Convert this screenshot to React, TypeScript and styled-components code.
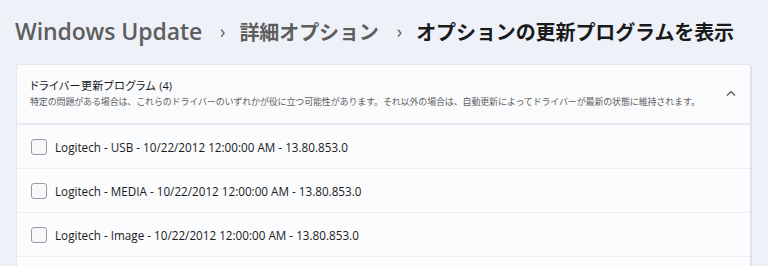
import styled, { createGlobalStyle } from "styled-components";

const GlobalStyle = createGlobalStyle`
  html, body {
    margin: 0;
    padding: 0;
    background: #eef2f8;
  }
  body {
    font-family: "Open Sans", "Noto Sans CJK JP", sans-serif;
    color: #1b1b1b;
    overflow: hidden;
  }
`;

// only the first three fit in the window
const drivers = [
  "Logitech - USB - 10/22/2012 12:00:00 AM - 13.80.853.0",
  "Logitech - MEDIA - 10/22/2012 12:00:00 AM - 13.80.853.0",
  "Logitech - Image - 10/22/2012 12:00:00 AM - 13.80.853.0",
];

const App = () => {
  return (
    <Page>
      <GlobalStyle />
      <Breadcrumb>
        <Crumb $latin>Windows Update</Crumb>
        <Separator>›</Separator>
        <Crumb>詳細オプション</Crumb>
        <Separator>›</Separator>
        <Crumb $current>オプションの更新プログラムを表示</Crumb>
      </Breadcrumb>

      <Expander>
        <ExpanderHeader>
          <HeaderText>
            <HeaderTitle>
              ドライバー更新プログラム <Count>(4)</Count>
            </HeaderTitle>
            <HeaderDesc>
              特定の問題がある場合は、これらのドライバーのいずれかが役に立つ可能性があります。それ以外の場合は、自動更新によってドライバーが最新の状態に維持されます。
            </HeaderDesc>
          </HeaderText>
          <ChevronButton>
            <svg width="10" height="6" viewBox="0 0 10 6">
              <polyline
                points="1,5.5 5,1.5 9,5.5"
                fill="none"
                stroke="#4a4a4a"
                strokeWidth="1.1"
              />
            </svg>
          </ChevronButton>
        </ExpanderHeader>
        <DriverList>
          {drivers.map((d) => (
            <DriverRow key={d}>
              <CheckBox />
              <DriverLabel>{d}</DriverLabel>
            </DriverRow>
          ))}
          <DriverRow />
        </DriverList>
      </Expander>
    </Page>
  );
};
export default App;

const Page = styled.div`
  width: 768px;
  height: 266px;
  overflow: hidden;
`;

const Breadcrumb = styled.div`
  display: flex;
  align-items: center;
  height: 40px;
  padding: 11px 0 0 15px;
  margin-bottom: 13px;
`;

const Crumb = styled.span<{ $latin?: boolean; $current?: boolean }>`
  font-size: ${(p) => (p.$latin ? "23px" : "20px")};
  font-weight: 600;
  letter-spacing: -0.1px;
  color: ${(p) => (p.$current ? "#1a1a1a" : "#5e5e5e")};
  white-space: nowrap;
`;

const Separator = styled.span`
  font-size: 18px;
  color: #5e5e5e;
  margin: 0 14px 0 18px;
`;

const Expander = styled.div`
  margin: 0 16px;
  width: 736px;
  border: 1px solid #e4e6ea;
  border-right: 2px solid #dfe2e7;
  border-radius: 4px 4px 0 0;
  background: #fafbfd;
  box-sizing: border-box;
`;

const ExpanderHeader = styled.div`
  display: flex;
  align-items: center;
  height: 58px;
  padding: 0 12px 0 13px;
  border-bottom: 2px solid #e9ebef;
`;

const HeaderText = styled.div`
  flex: 1;
  display: flex;
  flex-direction: column;
`;

const HeaderTitle = styled.div`
  font-size: 11px;
  line-height: 16px;
  letter-spacing: 0.4px;
  font-feature-settings: "palt";
  color: #1b1b1b;
`;

const Count = styled.span`
  font-feature-settings: normal;
  letter-spacing: 0;
`;

const HeaderDesc = styled.div`
  font-size: 9px;
  line-height: 16px;
  letter-spacing: -0.15px;
  color: #5f5f5f;
  white-space: nowrap;
`;

const ChevronButton = styled.div`
  display: flex;
  align-items: center;
  justify-content: center;
  width: 14px;
  height: 14px;
  margin-top: -2px;
`;

const DriverList = styled.div`
  display: flex;
  flex-direction: column;
`;

const DriverRow = styled.div`
  display: flex;
  align-items: center;
  height: 44px;
  padding-left: 14px;
  border-bottom: 1px solid #eceef1;
  box-sizing: border-box;
  background: #fbfcfe;
`;

const CheckBox = styled.span`
  width: 16px;
  height: 16px;
  box-sizing: border-box;
  border: 1px solid #979a9f;
  border-radius: 3px;
  background: #f7f8fa;
  margin-right: 8px;
`;

const DriverLabel = styled.span`
  font-size: 11.7px;
  color: #1b1b1b;
  white-space: nowrap;
`;
